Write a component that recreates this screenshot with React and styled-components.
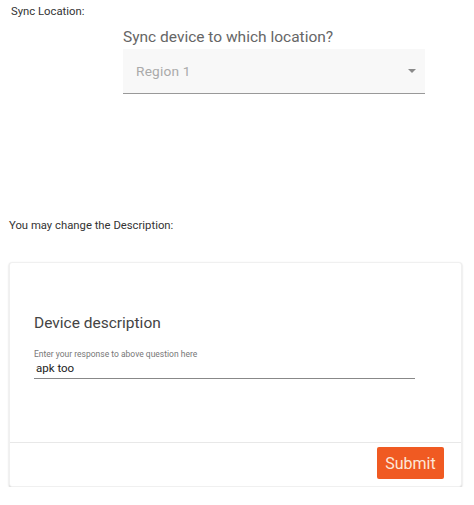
import React, { useState } from 'react';
import styled, { createGlobalStyle } from 'styled-components';

const GlobalStyle = createGlobalStyle`
  body {
    margin: 0;
    background: #fff;
    font-family: Roboto, "Liberation Sans", Arial, sans-serif;
  }
`;

const Page = styled.div`
  display: flex;
  flex-direction: column;
  padding-top: 5px;
`;

const SectionLabel = styled.div`
  font-size: 11.3px;
  color: #333;
  line-height: 14px;
  padding-left: ${props => props.indent}px;
`;

const SelectBlock = styled.div`
  margin-left: 123px;
  margin-top: 8px;
  width: 302px;
  display: flex;
  flex-direction: column;
`;

const SelectTitle = styled.div`
  font-size: 15.5px;
  color: #666;
  line-height: 20px;
  margin-bottom: 2px;
`;

const SelectBox = styled.div`
  height: 45px;
  background: #f8f8f8;
  border-bottom: 1.5px solid #999;
  display: flex;
  align-items: center;
  justify-content: space-between;
  padding: 0 9px 0 13px;
  box-sizing: border-box;
  cursor: pointer;
`;

const SelectValue = styled.span`
  font-size: 13.7px;
  color: #aaa;
  letter-spacing: 0.2px;
`;

const Caret = styled.span`
  width: 0;
  height: 0;
  border-left: 4px solid transparent;
  border-right: 4px solid transparent;
  border-top: 4px solid #8a8a8a;
`;

const DescriptionBlock = styled.div`
  margin-top: 125px;
  display: flex;
  flex-direction: column;
`;

const Card = styled.div`
  margin: 29px 0 0 9px;
  width: 453px;
  background: #fff;
  border: 1px solid #f0f0f0;
  border-radius: 3px;
  box-shadow: 0 1px 2px rgba(0, 0, 0, 0.22);
  display: flex;
  flex-direction: column;
  box-sizing: border-box;
`;

const CardBody = styled.div`
  height: 180px;
  padding: 50px 46px 0 24px;
  box-sizing: border-box;
  border-bottom: 1px solid #e8e8e8;
`;

const Question = styled.div`
  font-size: 15.5px;
  color: #444;
  line-height: 20px;
`;

const Field = styled.label`
  display: flex;
  flex-direction: column;
  margin-top: 16px;
`;

const FieldHint = styled.span`
  font-size: 8.5px;
  color: #777;
  line-height: 10px;
`;

const FieldInput = styled.input`
  border: none;
  border-bottom: 1px solid #888;
  outline: none;
  padding: 2px 2px 3px;
  font-family: inherit;
  font-size: 11.5px;
  color: #222;
  background: transparent;
`;

const CardFooter = styled.div`
  display: flex;
  justify-content: flex-end;
  padding: 4px 17px 7px;
`;

const SubmitButton = styled.button`
  width: 67px;
  height: 32px;
  border: none;
  border-radius: 2px;
  background: #f05a22;
  color: #fde7d8;
  font-family: inherit;
  font-size: 16px;
  cursor: pointer;
`;

export default function App() {
  const [value, setValue] = useState('apk too');

  return (
    <>
      <GlobalStyle />
      <Page>
        <SectionLabel indent={11}>Sync Location:</SectionLabel>
        <SelectBlock>
          <SelectTitle>Sync device to which location?</SelectTitle>
          <SelectBox>
            <SelectValue>Region 1</SelectValue>
            <Caret />
          </SelectBox>
        </SelectBlock>

        <DescriptionBlock>
          <SectionLabel indent={9}>You may change the Description:</SectionLabel>
          <Card>
            <CardBody>
              <Question>Device description</Question>
              <Field>
                <FieldHint>Enter your response to above question here</FieldHint>
                <FieldInput value={value} onChange={e => setValue(e.target.value)} />
              </Field>
            </CardBody>
            <CardFooter>
              <SubmitButton>Submit</SubmitButton>
            </CardFooter>
          </Card>
        </DescriptionBlock>
      </Page>
    </>
  );
}
